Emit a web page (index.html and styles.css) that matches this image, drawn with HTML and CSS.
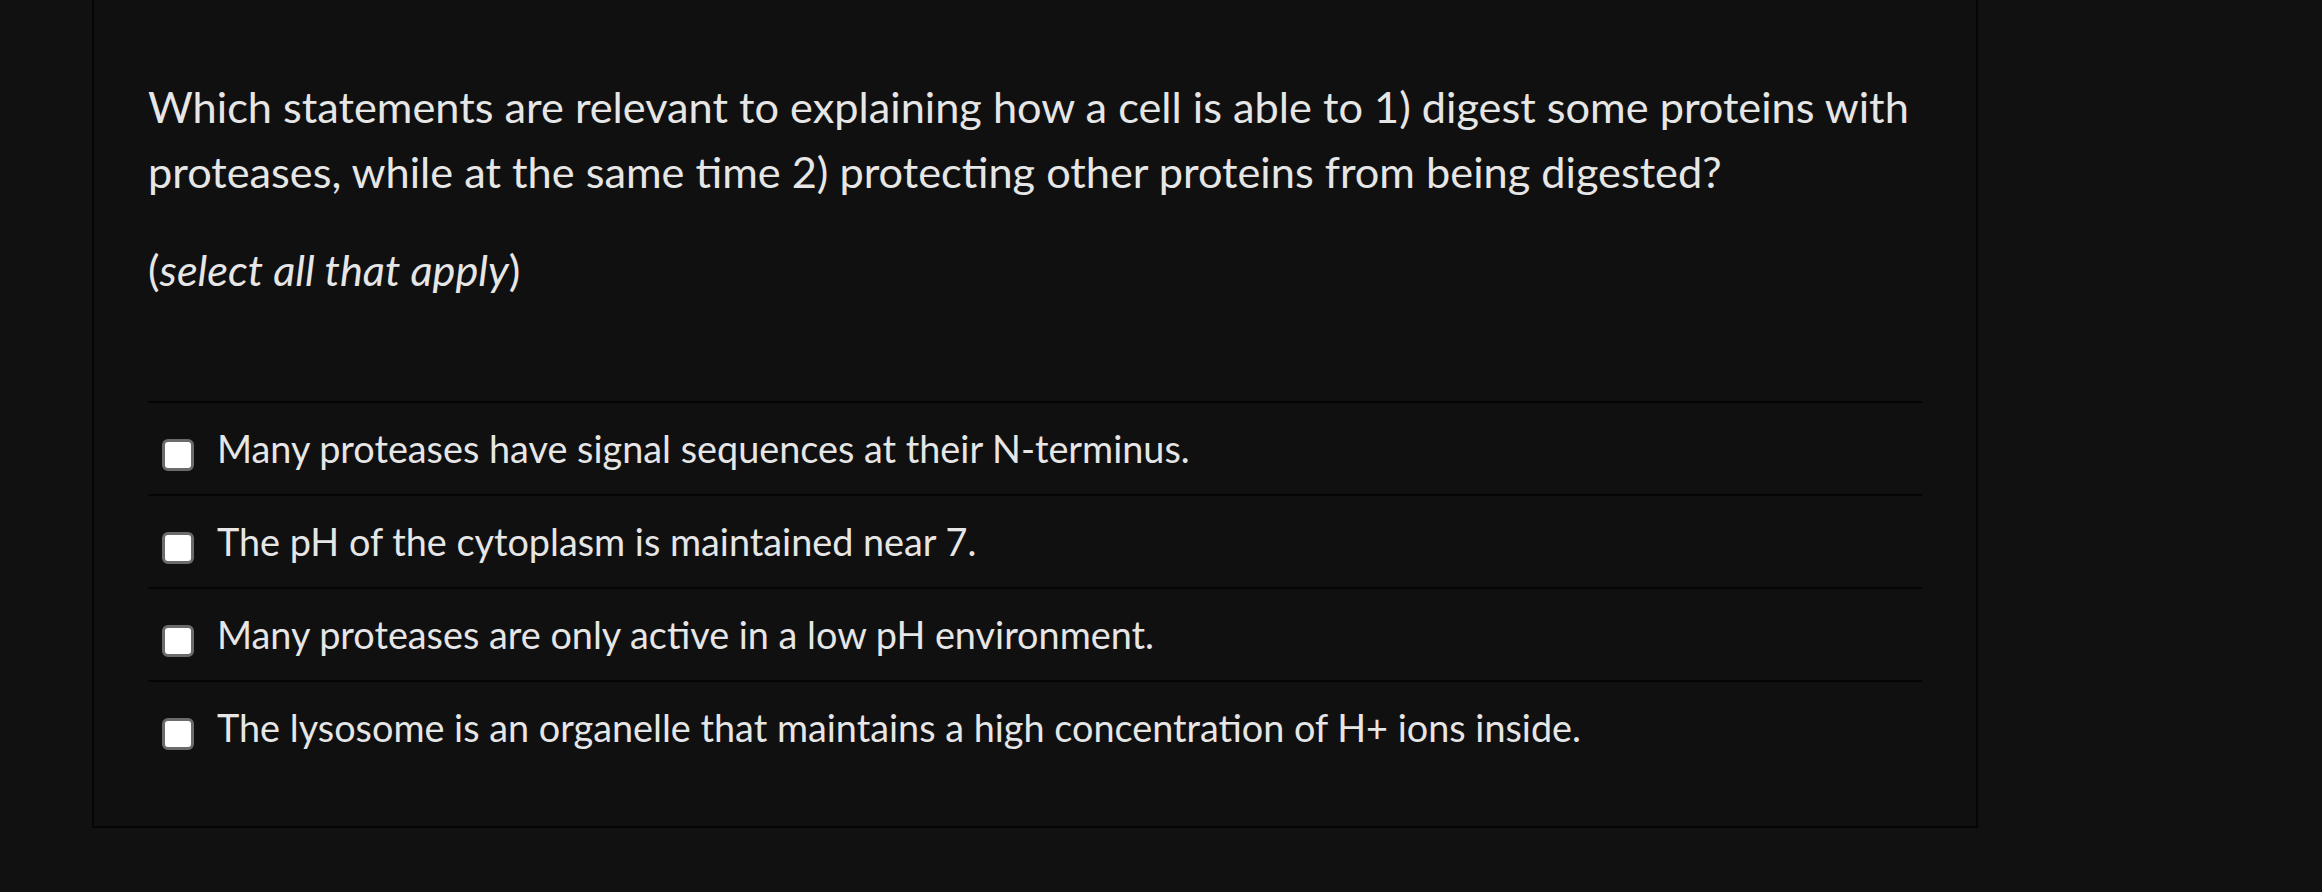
FILE: index.html
```html
<!DOCTYPE html>
<html>
<head>
<meta charset="utf-8">
<link rel="stylesheet" href="styles.css">
</head>
<body>
<div class="card">
  <div class="question">
    <p class="q-text">Which statements are relevant to explaining how a cell is able to 1) digest some proteins with proteases, while at the same time 2) protecting other proteins from being digested?</p>
    <p class="q-note">(<em>select all that apply</em>)</p>
  </div>
  <div class="answers">
    <label class="answer"><span class="box"></span><span class="label">Many proteases have signal sequences at their N-terminus.</span></label>
    <label class="answer"><span class="box"></span><span class="label">The pH of the cytoplasm is maintained near 7.</span></label>
    <label class="answer"><span class="box"></span><span class="label">Many proteases are only active in a low pH environment.</span></label>
    <label class="answer"><span class="box"></span><span class="label">The lysosome is an organelle that maintains a high concentration of H+ ions inside.</span></label>
  </div>
</div>
</body>
</html>
```
FILE: styles.css
```css
html, body {
  margin: 0;
  padding: 0;
  background: #111111;
}
body {
  font-family: Lato, "Open Sans", "Liberation Sans", sans-serif;
  color: #e6e6e6;
  height: 892px;
  overflow: hidden;
}
.card {
  margin-left: 92px;
  width: 1886px;
  box-sizing: border-box;
  border: 2px solid #050505;
  border-top: none;
  background: #101010;
  padding: 74px 54px 53px 54px;
}
.q-text {
  margin: 0;
  font-size: 43.3px;
  line-height: 65px;
}
.q-note {
  margin: 33px 0 0 0;
  font-size: 43.3px;
  line-height: 65px;
}
.answers {
  margin-top: 99px;
}
.answer {
  display: flex;
  align-items: center;
  height: 93px;
  box-sizing: border-box;
  border-top: 2px solid #050505;
  font-size: 37.8px;
}
.box {
  width: 26px;
  height: 26px;
  margin-left: 14px;
  margin-right: 23px;
  background: #ffffff;
  border: 3px solid #6b6b6b;
  border-radius: 6px;
  flex: none;
  position: relative;
  top: 6px;
}
.label {
  line-height: 40px;
}
```
